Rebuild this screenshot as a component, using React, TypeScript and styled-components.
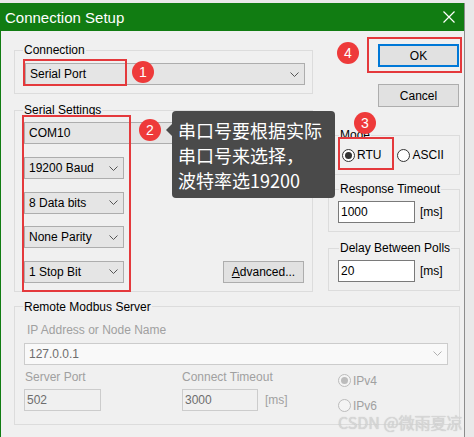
import React from "react";
import styled, { createGlobalStyle } from "styled-components";

const GlobalStyle = createGlobalStyle`
  html, body {
    margin: 0;
    padding: 0;
    background: #e9e9e9;
  }
  body {
    font-family: "Liberation Sans", Arial, sans-serif;
    font-size: 12px;
    color: #000;
  }
`;

const Page = styled.div`
  position: relative;
  width: 474px;
  height: 437px;
  overflow: hidden;
`;

const Window = styled.div`
  width: 465px;
  height: 434px;
  margin-top: 3px;
  background: #f0f0f0;
  border-left: 1px solid #117c12;
  border-right: 1px solid #8c8c8c;
  box-sizing: border-box;
`;

const TitleBar = styled.div`
  height: 28px;
  display: flex;
  align-items: center;
  justify-content: space-between;
  padding: 0 9px 0 4px;
  background: #117c12;
  color: #fff;
  font-size: 15px;
`;

const Body = styled.div`
  display: grid;
  grid-template-columns: 299px 132px;
  column-gap: 15px;
  row-gap: 8px;
  padding: 12px 0 0 13px;
`;

const Column = styled.div`
  display: flex;
  flex-direction: column;
`;

const Group = styled.fieldset<{ $top?: number }>`
  margin: ${(p) => p.$top ?? 0}px 0 0 0;
  padding: 0 7px 8px 9px;
  border: 1px solid #dcdcdc;
  min-width: 0;
`;

const Legend = styled.legend<{ $shift?: number }>`
  padding: 0 1px;
  margin-left: ${(p) => p.$shift ?? -1}px;
  line-height: 14px;
  font-size: 12px;
`;

const Combo = styled.div<{ $w?: number; $top?: number; $off?: boolean }>`
  height: 22px;
  box-sizing: border-box;
  width: ${(p) => (p.$w ? `${p.$w}px` : "auto")};
  margin-top: ${(p) => p.$top ?? 0}px;
  display: flex;
  align-items: center;
  justify-content: space-between;
  padding: 0 5px 0 4px;
  background: ${(p) => (p.$off ? "#f9f9f9" : "#e5e5e5")};
  border: 1px solid ${(p) => (p.$off ? "#cccccc" : "#adadad")};
  color: ${(p) => (p.$off ? "#6d6d6d" : "#000")};
`;

const ComboStack = styled.div`
  display: flex;
  flex-direction: column;
  gap: 12.5px;
`;

const SerialRow = styled.div`
  display: flex;
  justify-content: space-between;
  align-items: flex-end;
  margin-top: 13px;
`;

const Button = styled.div<{ $default?: boolean; $w: number; $top?: number }>`
  width: ${(p) => p.$w}px;
  height: 23px;
  box-sizing: border-box;
  margin-top: ${(p) => p.$top ?? 0}px;
  display: flex;
  align-items: center;
  justify-content: center;
  background: #e1e1e1;
  border: 1px solid ${(p) => (p.$default ? "#0078d7" : "#adadad")};
  box-shadow: ${(p) => (p.$default ? "inset 0 0 0 1px #0078d7" : "none")};
`;

const ButtonStack = styled.div`
  display: flex;
  flex-direction: column;
  align-items: flex-end;
  margin: 1px 1px 0 0;
`;

const Underline = styled.span`
  text-decoration: underline;
`;

const RadioRow = styled.div`
  display: flex;
  align-items: center;
  gap: 16px;
  margin: 5px 0 0 4px;
`;

const RadioItem = styled.div<{ $off?: boolean }>`
  display: flex;
  align-items: center;
  gap: 2px;
  height: 16px;
  color: ${(p) => (p.$off ? "#a0a0a0" : "#000")};
`;

const Dot = styled.span<{ $on?: boolean; $off?: boolean }>`
  width: 13px;
  height: 13px;
  box-sizing: border-box;
  border-radius: 50%;
  border: 1px solid ${(p) => (p.$off ? "#bcbcbc" : "#333")};
  background: ${(p) => (p.$off ? "#f4f4f4" : "#fff")};
  display: flex;
  align-items: center;
  justify-content: center;
  &::after {
    content: "";
    width: 7px;
    height: 7px;
    border-radius: 50%;
    background: ${(p) => (p.$off ? "#bcbcbc" : "#333")};
    display: ${(p) => (p.$on ? "block" : "none")};
  }
`;

const FieldRow = styled.div`
  display: flex;
  align-items: center;
  gap: 5px;
  margin-top: 5px;
`;

const Edit = styled.div<{ $w: number; $off?: boolean }>`
  width: ${(p) => p.$w}px;
  height: 22px;
  box-sizing: border-box;
  display: flex;
  align-items: center;
  padding-left: 2px;
  background: ${(p) => (p.$off ? "#f0f0f0" : "#fff")};
  border: 1px solid ${(p) => (p.$off ? "#cccccc" : "#7a7a7a")};
  color: ${(p) => (p.$off ? "#6d6d6d" : "#000")};
`;

const Unit = styled.span<{ $off?: boolean }>`
  color: ${(p) => (p.$off ? "#a0a0a0" : "#000")};
`;

const RemoteGroup = styled(Group)`
  grid-column: 1 / -1;
  width: 446px;
  box-sizing: border-box;
  padding: 0 11px 10px 9px;
`;

const Muted = styled.div<{ $top?: number; $left?: number }>`
  color: #a0a0a0;
  line-height: 14px;
  margin-top: ${(p) => p.$top ?? 0}px;
  margin-left: ${(p) => p.$left ?? 0}px;
`;

const ServerGrid = styled.div`
  display: grid;
  grid-template-columns: 158px 156px 1fr;
  margin-top: 5px;
`;

const RadioColumn = styled.div`
  display: flex;
  flex-direction: column;
  gap: 9px;
  margin: 3px 0 0 0;
`;

/* annotations drawn over the dialog */

const RedBox = styled.div`
  position: absolute;
  border: 2px solid #e4393c;
  box-sizing: border-box;
`;

const Badge = styled.div`
  position: absolute;
  width: 22px;
  height: 22px;
  border-radius: 50%;
  background: #ee3a3a;
  color: #fff;
  font-size: 14px;
  display: flex;
  align-items: center;
  justify-content: center;
`;

const Tip = styled.div`
  position: absolute;
  left: 172px;
  top: 111px;
  width: 163px;
  height: 87px;
  box-sizing: border-box;
  padding: 7px 0 0 6px;
  background: #4a4a4a;
  border-radius: 4px;
  color: #fff;
  font-family: "Noto Sans CJK SC", "Liberation Sans", sans-serif;
  font-size: 18px;
  line-height: 25px;
  white-space: nowrap;
  &::before {
    content: "";
    position: absolute;
    left: -6px;
    top: 13px;
    border-top: 6px solid transparent;
    border-bottom: 6px solid transparent;
    border-right: 6px solid #4a4a4a;
  }
`;

const Watermark = styled.div`
  position: absolute;
  left: 338px;
  top: 410px;
  font-family: "Noto Sans CJK SC", "Liberation Sans", sans-serif;
  font-size: 16px;
  color: #d6d6d6;
  text-shadow: 0 0 1px rgba(140, 140, 140, 0.45);
  white-space: nowrap;
`;

const Chevron = ({ off }: { off?: boolean }) => (
  <svg width="9" height="5" viewBox="0 0 9 5">
    <path d="M0.5 0.5 L4.5 4.5 L8.5 0.5" fill="none" stroke={off ? "#b0b0b0" : "#555"} strokeWidth="1" />
  </svg>
);

const CloseIcon = () => (
  <svg width="12" height="12" viewBox="0 0 12 12">
    <path d="M0.5 0.5 L11.5 11.5 M11.5 0.5 L0.5 11.5" stroke="#fff" strokeWidth="1.2" />
  </svg>
);

const serialOptions = ["19200 Baud", "8 Data bits", "None Parity", "1 Stop Bit"];

export default function App() {
  return (
    <Page>
      <GlobalStyle />
      <Window>
        <TitleBar>
          <span>Connection Setup</span>
          <CloseIcon />
        </TitleBar>
        <Body>
          <Column>
            <Group>
              <Legend>Connection</Legend>
              <Combo $top={6} style={{ marginLeft: 1 }}>
                <span>Serial Port</span>
                <Chevron />
              </Combo>
            </Group>
            <Group $top={9}>
              <Legend>Serial Settings</Legend>
              <Combo $top={5}>
                <span>COM10</span>
                <Chevron />
              </Combo>
              <SerialRow>
                <ComboStack>
                  {serialOptions.map((o) => (
                    <Combo key={o} $w={100}>
                      <span>{o}</span>
                      <Chevron />
                    </Combo>
                  ))}
                </ComboStack>
                <Button $w={81} style={{ height: 22, marginRight: 1 }}>
                  <span>
                    <Underline>A</Underline>dvanced...
                  </span>
                </Button>
              </SerialRow>
            </Group>
          </Column>
          <Column>
            <ButtonStack>
              <Button $w={81} $default>
                OK
              </Button>
              <Button $w={81} $top={17}>
                Cancel
              </Button>
            </ButtonStack>
            <Group $top={21} style={{ paddingBottom: 11 }}>
              <Legend $shift={1}>Mode</Legend>
              <RadioRow>
                <RadioItem>
                  <Dot $on />
                  <span>RTU</span>
                </RadioItem>
                <RadioItem>
                  <Dot />
                  <span>ASCII</span>
                </RadioItem>
              </RadioRow>
            </Group>
            <Group $top={7}>
              <Legend $shift={1}>Response Timeout</Legend>
              <FieldRow>
                <Edit $w={77}>1000</Edit>
                <Unit>[ms]</Unit>
              </FieldRow>
            </Group>
            <Group $top={9}>
              <Legend $shift={1}>Delay Between Polls</Legend>
              <FieldRow>
                <Edit $w={77}>20</Edit>
                <Unit>[ms]</Unit>
              </FieldRow>
            </Group>
          </Column>
          <RemoteGroup>
            <Legend>Remote Modbus Server</Legend>
            <Muted $top={9} $left={3}>
              IP Address or Node Name
            </Muted>
            <Combo $top={6} $off>
              <span>127.0.0.1</span>
              <Chevron off />
            </Combo>
            <ServerGrid>
              <div>
                <Muted $left={1}>Server Port</Muted>
                <FieldRow>
                  <Edit $w={77} $off>
                    502
                  </Edit>
                </FieldRow>
              </div>
              <div>
                <Muted>Connect Timeout</Muted>
                <FieldRow style={{ gap: 7 }}>
                  <Edit $w={76} $off>
                    3000
                  </Edit>
                  <Unit $off>[ms]</Unit>
                </FieldRow>
              </div>
              <RadioColumn>
                <RadioItem $off>
                  <Dot $on $off />
                  <span>IPv4</span>
                </RadioItem>
                <RadioItem $off>
                  <Dot $off />
                  <span>IPv6</span>
                </RadioItem>
              </RadioColumn>
            </ServerGrid>
          </RemoteGroup>
        </Body>
      </Window>

      <RedBox style={{ left: 23, top: 59, width: 104, height: 27 }} />
      <RedBox style={{ left: 22, top: 115, width: 109, height: 177 }} />
      <RedBox style={{ left: 338, top: 137, width: 56, height: 33 }} />
      <RedBox style={{ left: 367, top: 37, width: 95, height: 36 }} />
      <Badge style={{ left: 132, top: 61 }}>1</Badge>
      <Badge style={{ left: 139, top: 119 }}>2</Badge>
      <Badge style={{ left: 354, top: 112 }}>3</Badge>
      <Badge style={{ left: 337, top: 42 }}>4</Badge>
      <Tip>
        <div>串口号要根据实际</div>
        <div>串口号来选择，</div>
        <div>波特率选19200</div>
      </Tip>
      <Watermark>CSDN @微雨夏凉</Watermark>
    </Page>
  );
}
